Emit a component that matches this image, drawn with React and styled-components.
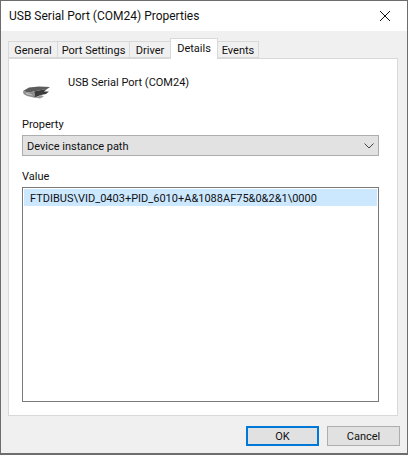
import React from 'react';
import styled, { createGlobalStyle } from 'styled-components';

const GlobalStyle = createGlobalStyle`
    html, body {
        margin: 0;
        padding: 0;
        background: #f0f0f0;
    }
    * {
        box-sizing: border-box;
    }
`;

const Window = styled.div`
    width: 408px;
    height: 455px;
    display: flex;
    flex-direction: column;
    background: #f0f0f0;
    border: 1px solid #6d6d6d;
    border-bottom-width: 2px;
    font-family: Roboto, 'Liberation Sans', Arial, sans-serif;
    font-size: 11px;
    color: #1a1a1a;
    overflow: hidden;
`;

const TitleBar = styled.div`
    height: 30px;
    flex: none;
    display: flex;
    align-items: center;
    justify-content: space-between;
    background: #fff;
    padding: 0 0 0 8px;
`;

const Title = styled.div`
    font-size: 12px;
    color: #111;
`;

const CloseButton = styled.div`
    width: 46px;
    height: 30px;
    display: flex;
    align-items: center;
    justify-content: center;
    padding-left: 2px;
`;

const Body = styled.div`
    flex: 1;
    display: flex;
    flex-direction: column;
    padding: 7px 7px 0 7px;
`;

const TabStrip = styled.div`
    height: 20px;
    flex: none;
    display: flex;
    align-items: flex-end;
    position: relative;
    z-index: 1;
`;

const Tab = styled.div`
    width: ${(p) => p.$width}px;
    height: ${(p) => (p.$active ? 21 : 17)}px;
    margin-bottom: ${(p) => (p.$active ? -1 : 0)}px;
    display: flex;
    align-items: center;
    justify-content: center;
    padding-top: ${(p) => (p.$active ? 0 : 1)}px;
    padding-bottom: ${(p) => (p.$active ? 2 : 0)}px;
    background: ${(p) => (p.$active ? '#fff' : '#f0f0f0')};
    border: 1px solid #d9d9d9;
    border-bottom: ${(p) => (p.$active ? 'none' : '1px solid #d9d9d9')};
    margin-right: -1px;
    font-size: 11px;
    color: #111;
`;

const Panel = styled.div`
    height: 358px;
    flex: none;
    margin-right: 2px;
    background: #fff;
    border: 1px solid #d9d9d9;
    padding: 16px 18px 0 13px;
    display: flex;
    flex-direction: column;
`;

const DeviceRow = styled.div`
    height: 33px;
    flex: none;
    display: flex;
    align-items: flex-start;
`;

const DeviceIconBox = styled.div`
    width: 46px;
    height: 32px;
    flex: none;
    display: flex;
    align-items: center;
    padding-top: 3px;
`;

const DeviceName = styled.div`
    padding-top: 1px;
    font-size: 11px;
    color: #111;
`;

const FieldLabel = styled.div`
    height: 14px;
    line-height: 16px;
    margin-top: ${(p) => p.$top}px;
    font-size: 11px;
    color: #111;
`;

const Select = styled.div`
    height: 21px;
    flex: none;
    margin-top: 4px;
    display: flex;
    align-items: center;
    justify-content: space-between;
    padding: 1px 4px 0 4px;
    background: #e2e2e2;
    border: 1px solid #adadad;
    font-size: 11px;
    color: #111;
`;

const ValueList = styled.div`
    height: 215px;
    flex: none;
    margin-top: 4px;
    border: 1px solid #7a7a7a;
    padding: 1px;
    background: #fff;
`;

const ValueRow = styled.div`
    height: 17px;
    display: flex;
    align-items: center;
    padding: 1px 0 0 6px;
    background: #cce8ff;
    font-size: 11px;
    color: #111;
`;

const Footer = styled.div`
    flex: 1;
    display: flex;
    justify-content: flex-end;
    align-items: flex-start;
    gap: 8px;
    padding: 10px 0 0;
`;

const Button = styled.div`
    width: 73px;
    height: 20px;
    display: flex;
    align-items: center;
    justify-content: center;
    background: #e1e1e1;
    border: ${(p) => (p.$primary ? '2px solid #0078d7' : '1px solid #adadad')};
    font-size: 11px;
    color: #111;
`;

const UsbIcon = () => (
    <svg width="30" height="16" viewBox="0 0 30 16">
        <path d="M1 6 L7 2.5 L17 1.5 L28 2 L25 4 L19 5 L12 6.5 L6 7.5 Z" fill="#5c5c5c" />
        <path d="M1 6 L6 7.5 L12 6.5 L13 10 L12 12.5 L5 11 L1.5 9 Z" fill="#8c8c8c" />
        <path d="M12 6.5 L19 5 L25 4 L22 6.5 L27 6.5 L24 9 L19 10 L13 12.5 L12 12.5 L13 10 Z" fill="#3c3c3c" />
        <path d="M3 7.5 L10 9.5 L11 10.5 L5 9.5 Z" fill="#c4c4c4" />
        <path d="M5 11 L12 12.5 L18 13.5 L22 11.5 L19 10 L13 12.5 Z" fill="#9a9a9a" />
    </svg>
);

const App = () => (
    <>
        <GlobalStyle />
        <Window>
            <TitleBar>
                <Title>USB Serial Port (COM24) Properties</Title>
                <CloseButton>
                    <svg width="10" height="10" viewBox="0 0 10 10">
                        <path d="M0 0 L10 10 M10 0 L0 10" stroke="#111" strokeWidth="1" fill="none" />
                    </svg>
                </CloseButton>
            </TitleBar>
            <Body>
                <TabStrip>
                    <Tab $width={50}>General</Tab>
                    <Tab $width={73}>Port Settings</Tab>
                    <Tab $width={42}>Driver</Tab>
                    <Tab $width={48} $active>Details</Tab>
                    <Tab $width={42}>Events</Tab>
                </TabStrip>
                <Panel>
                    <DeviceRow>
                        <DeviceIconBox>
                            <UsbIcon />
                        </DeviceIconBox>
                        <DeviceName>USB Serial Port (COM24)</DeviceName>
                    </DeviceRow>
                    <FieldLabel $top={9}>Property</FieldLabel>
                    <Select>
                        Device instance path
                        <svg width="10" height="6" viewBox="0 0 10 6">
                            <path d="M0.5 0.5 L5 5 L9.5 0.5" stroke="#444" strokeWidth="1" fill="none" />
                        </svg>
                    </Select>
                    <FieldLabel $top={13}>Value</FieldLabel>
                    <ValueList>
                        <ValueRow>FTDIBUS\VID_0403+PID_6010+A&amp;1088AF75&amp;0&amp;2&amp;1\0000</ValueRow>
                    </ValueList>
                </Panel>
                <Footer>
                    <Button $primary>OK</Button>
                    <Button>Cancel</Button>
                </Footer>
            </Body>
        </Window>
    </>
);

export default App;
